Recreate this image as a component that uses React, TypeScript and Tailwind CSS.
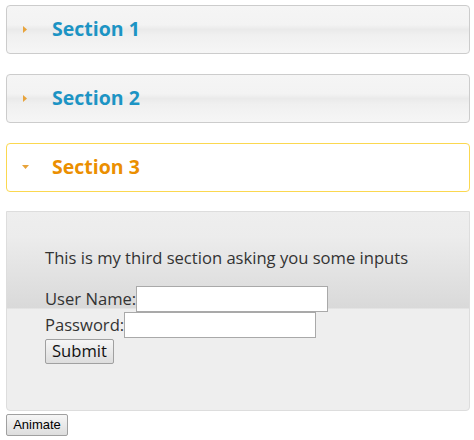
import React from "react";

const glass =
  "bg-[linear-gradient(to_bottom,#f5f5f5_0%,#f3f3f3_40%,#eaeaea_50%,#f0f0f0_62%,#f6f6f6_100%)]";

function Header({ label, active }: { label: string; active?: boolean }) {
  return (
    <div
      className={
        "flex h-[49px] items-center rounded-[4px] border pb-[2px] " +
        (active
          ? "border-[#fbd850] bg-white text-[#eb8f00]"
          : "border-[#cccccc] text-[#1c94c4] " + glass)
      }
    >
      <div className="flex w-[45px] items-center pl-[15px] pt-[1px]">
        {active ? (
          <svg width="7" height="4" viewBox="0 0 7 4">
            <path d="M0 0H7L3.5 4Z" fill="#e8a33a" />
          </svg>
        ) : (
          <svg width="4" height="7" viewBox="0 0 4 7" className="ml-[1px]">
            <path d="M0 0V7L4 3.5Z" fill="#e8a33a" />
          </svg>
        )}
      </div>
      <span className="text-[19.5px] font-bold leading-none [font-family:'Open_Sans',sans-serif]">
        {label}
      </span>
    </div>
  );
}

export default function App() {
  return (
    <div className="w-[474px] bg-white [font-family:'Open_Sans',sans-serif]">
      <div className="flex w-[470px] flex-col pl-[6px] pt-[5px]">
        <Header label="Section 1" />
        <div className="h-[20px]" />
        <Header label="Section 2" />
        <div className="h-[20px]" />
        <Header label="Section 3" active />
        <div className="h-[19px]" />
        <div className="h-[200px] rounded-b-[4px] border border-[#dddddd] bg-[#eeeeee] bg-[linear-gradient(to_bottom,#eeeeee_0px,#ececec_25px,#d9d9d9_96px,#eeeeee_97px,#eeeeee_100%)] pl-[38px] pt-[34px] text-[16.6px] text-[#333333]">
          <p className="leading-[24px]">This is my third section asking you some inputs</p>
          <div className="mt-[16px] flex h-[26px] items-center">
            <span>User Name:</span>
            <input className="h-[26px] w-[192px] border border-[#a9a9a9] bg-white" />
          </div>
          <div className="flex h-[26px] items-center">
            <span>Password:</span>
            <input className="h-[26px] w-[192px] border border-[#a9a9a9] bg-white" />
          </div>
          <button className="mt-[1px] h-[25px] rounded-[2px] border border-[#a0a0a0] bg-[linear-gradient(to_bottom,#f6f6f6,#dddddd)] px-[6px] text-[16.6px] leading-none text-[#111]">
            Submit
          </button>
        </div>
      </div>
      <div className="pl-[6px]">
        <button className="h-[22px] w-[62px] rounded-[2px] border border-[#a0a0a0] bg-[linear-gradient(to_bottom,#f6f6f6,#dddddd)] text-[13px] text-black [font-family:'Liberation_Sans',Arial,sans-serif]">
          Animate
        </button>
      </div>
      <div className="h-[8px]" />
    </div>
  );
}
